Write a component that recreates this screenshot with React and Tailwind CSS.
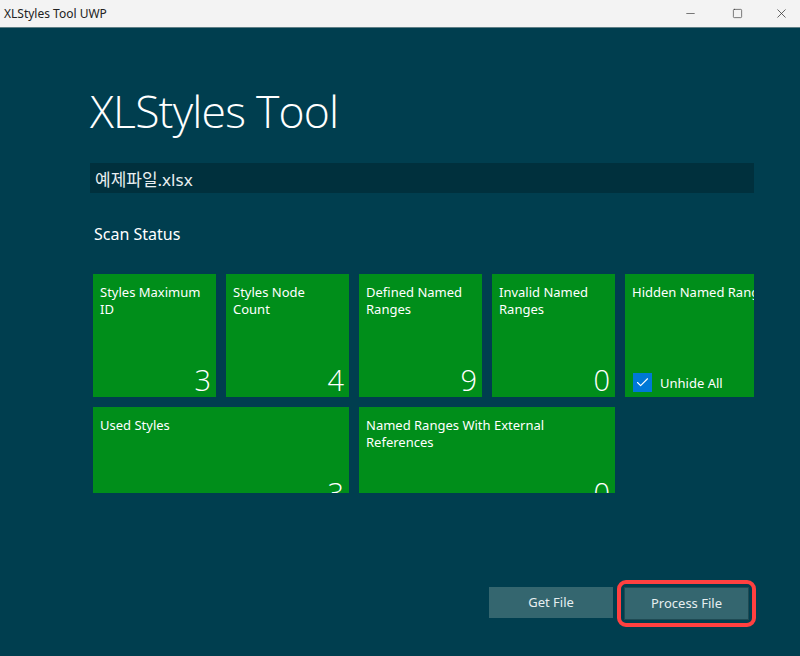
import { Minus, Square, X, Check } from 'lucide-react';

const font = { fontFamily: '"Noto Sans", "Open Sans", "Noto Sans CJK KR", sans-serif' };
const light = { fontFamily: '"Open Sans", "Noto Sans", sans-serif' };

function Tile({ title, value, wide, children }) {
  return (
    <div
      className={`relative bg-[#008e1a] text-white px-[7px] pt-[10px] overflow-hidden ${
        wide ? 'col-span-2 h-[103px]' : 'h-[123px]'
      }`}
    >
      <div className="text-[13px] leading-[17px] whitespace-nowrap">{title}</div>
      {value !== undefined && (
        <div
          className="absolute right-[5px] bottom-0 text-[29px] leading-[34px] font-light"
          style={light}
        >
          {value}
        </div>
      )}
      {children}
    </div>
  );
}

export default function App() {
  return (
    <div className="w-[800px] h-[656px] bg-[#003e4f] flex flex-col overflow-hidden" style={font}>
      {/* Title bar */}
      <div className="h-[28px] bg-[#f3f3f3] border-b border-[#5f7f86] flex items-center shrink-0">
        <span className="pl-[4px] text-[12px] text-[#222] flex-1">XLStyles Tool UWP</span>
        <div className="flex items-center text-[#333]">
          <div className="w-[44px] flex justify-center">
            <Minus size={13} strokeWidth={1.2} />
          </div>
          <div className="w-[50px] flex justify-center">
            <Square size={11} strokeWidth={1.4} />
          </div>
          <div className="w-[38px] flex justify-center">
            <X size={15} strokeWidth={1.2} />
          </div>
        </div>
      </div>

      {/* Main content */}
      <div className="flex flex-col pl-[90px] pr-[46px] flex-1">
        <h1
          className="mt-[55px] text-[44.5px] leading-[56px] font-light text-white tracking-[-0.8px]"
          style={light}
        >
          XLStyles Tool
        </h1>

        <div className="mt-[24px] h-[30px] bg-[#00303d] flex items-center px-[5px] pt-[3px]">
          <span className="text-[17px] text-[#e8eef0]">예제파일.xlsx</span>
        </div>

        <div className="mt-[30px] pl-[4px] text-[16px] leading-[22px] text-white">Scan Status</div>

        <div className="mt-[29px] ml-[3px] w-[661px] h-[219px] overflow-hidden">
          <div className="grid grid-cols-[123px_123px_123px_123px_160px] gap-[10px] items-start">
            <Tile title={<>Styles Maximum<br />ID</>} value="3" />
            <Tile title={<>Styles Node<br />Count</>} value="4" />
            <Tile title={<>Defined Named<br />Ranges</>} value="9" />
            <Tile title={<>Invalid Named<br />Ranges</>} value="0" />
            <Tile title="Hidden Named Ranges">
              <div className="absolute left-[8px] bottom-[5px] flex items-center gap-[8px]">
                <div className="w-[19px] h-[19px] bg-[#0078d7] flex items-center justify-center">
                  <Check size={15} strokeWidth={1.8} className="text-white" />
                </div>
                <span className="text-[13px] leading-[17px] mt-[3px]">Unhide All</span>
              </div>
            </Tile>
            <Tile title="Used Styles" value="3" wide />
            <Tile title={<>Named Ranges With External<br />References</>} value="0" wide />
          </div>
        </div>

        <div className="mt-auto mb-[36px] flex justify-end gap-[11px] pr-[5px]">
          <button className="w-[124px] h-[31px] bg-[#34666f] text-[#e6eef0] text-[13px]">
            Get File
          </button>
          <div className="-m-[7px] p-[3px] rounded-[9px] border-[4px] border-[#ff4040]">
            <button className="w-[125px] h-[33px] bg-[#34666f] border border-[#1f4a53] text-[#e6eef0] text-[13px]">
              Process File
            </button>
          </div>
        </div>
      </div>
    </div>
  );
}
